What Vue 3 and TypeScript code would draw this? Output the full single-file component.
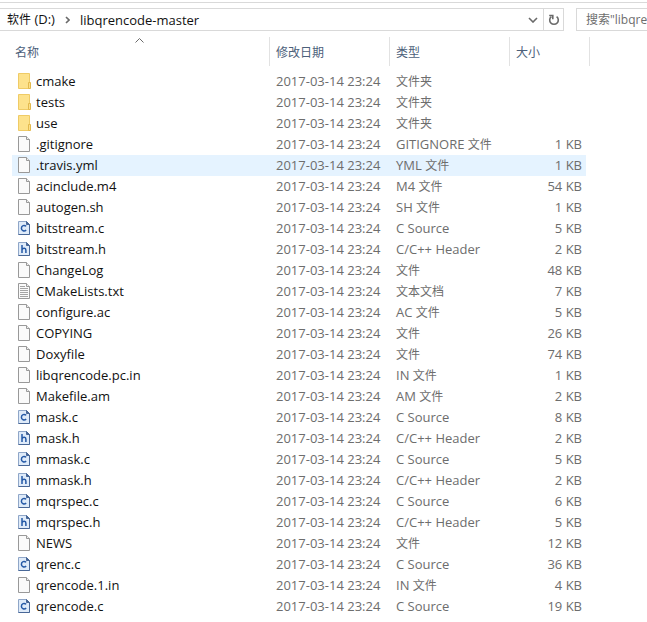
<script setup lang="ts">
import { ref } from 'vue'

type Icon = 'folder' | 'blank' | 'text' | 'c' | 'h'

interface Entry {
  name: string
  icon: Icon
  kind: string
  kindCjk: string
  size: string
}

const modified = '2017-03-14 23:24'

function folder(name: string): Entry {
  return { name, icon: 'folder', kind: '', kindCjk: '文件夹', size: '' }
}

function file(name: string, ext: string, kb: number): Entry {
  return { name, icon: 'blank', kind: ext ? ext + ' ' : '', kindCjk: '文件', size: kb + ' KB' }
}

function source(name: string, kb: number): Entry {
  const header = name.endsWith('.h')
  return {
    name,
    icon: header ? 'h' : 'c',
    kind: header ? 'C/C++ Header' : 'C Source',
    kindCjk: '',
    size: kb + ' KB',
  }
}

const entries: Entry[] = [
  folder('cmake'),
  folder('tests'),
  folder('use'),
  file('.gitignore', 'GITIGNORE', 1),
  file('.travis.yml', 'YML', 1),
  file('acinclude.m4', 'M4', 54),
  file('autogen.sh', 'SH', 1),
  source('bitstream.c', 5),
  source('bitstream.h', 2),
  file('ChangeLog', '', 48),
  { name: 'CMakeLists.txt', icon: 'text', kind: '', kindCjk: '文本文档', size: '7 KB' },
  file('configure.ac', 'AC', 5),
  file('COPYING', '', 26),
  file('Doxyfile', '', 74),
  file('libqrencode.pc.in', 'IN', 1),
  file('Makefile.am', 'AM', 2),
  source('mask.c', 8),
  source('mask.h', 2),
  source('mmask.c', 5),
  source('mmask.h', 2),
  source('mqrspec.c', 6),
  source('mqrspec.h', 5),
  file('NEWS', '', 12),
  source('qrenc.c', 36),
  file('qrencode.1.in', 'IN', 4),
  source('qrencode.c', 19),
]

const active = ref('.travis.yml')
const query = ref('')
</script>

<template>
  <div class="explorer">
    <header class="toolbar">
      <nav class="address" aria-label="路径">
        <a class="crumb" href="#"><span class="cjk">软件</span> (D:)</a>
        <svg class="chevron" viewBox="0 0 5 8" aria-hidden="true"><path d="M1 1l3 3-3 3" /></svg>
        <a class="crumb" href="#">libqrencode-master</a>
        <button class="history" type="button" aria-label="历史记录">
          <svg width="10" height="6" viewBox="0 0 10 6" aria-hidden="true"><path d="M1 1l4 4 4-4" /></svg>
        </button>
        <button class="refresh" type="button" aria-label="刷新">
          <svg width="12" height="12" viewBox="0 0 12 12" aria-hidden="true">
            <path d="M3.4 2.6A4.3 4.3 0 1 0 8.6 2.6" />
            <path d="M1.2 1.5h3.6v3.8" />
          </svg>
        </button>
      </nav>
      <input v-model="query" class="search" type="text" aria-label="搜索" placeholder='搜索"libqrencode-master"' />
    </header>

    <table class="files">
      <colgroup>
        <col class="col-name" />
        <col class="col-date" />
        <col class="col-type" />
        <col class="col-size" />
        <col class="col-edge" />
      </colgroup>
      <thead>
        <tr>
          <th scope="col" aria-sort="ascending">
            名称
            <svg class="sort" width="9" height="5" viewBox="0 0 9 5" aria-hidden="true"><path d="M.5 4.5l4-4 4 4" /></svg>
          </th>
          <th scope="col">修改日期</th>
          <th scope="col">类型</th>
          <th scope="col" colspan="2">大小</th>
        </tr>
      </thead>
      <tbody>
        <tr
          v-for="entry in entries"
          :key="entry.name"
          :class="{ active: entry.name === active }"
          @click="active = entry.name"
        >
          <td class="name">
            <div class="label">
              <svg v-if="entry.icon === 'folder'" class="icon" viewBox="0 0 13 16" aria-hidden="true">
                <path d="M.5.5h11v15H.5z" fill="#fde28c" stroke="#efcb66" />
                <path d="M10.5 9.5h2v6h-2z" fill="#fce08a" stroke="#e3b94d" />
              </svg>
              <svg v-else class="icon" viewBox="0 0 13 16" aria-hidden="true">
                <template v-if="entry.icon === 'c' || entry.icon === 'h'">
                  <path d="M.5 1.5h8l3 3v10H.5z" fill="#dfebf9" stroke="#8fa6c8" />
                  <path d="M8.5 1.5v3h3z" fill="#486797" stroke="#486797" />
                  <path d="M11.5 4.5v10H.5" fill="none" stroke="#486797" />
                  <path v-if="entry.icon === 'c'" d="M8.2 6.3C6.3 4.7 3.4 5.5 3.4 8.2s2.9 3.5 4.8 1.9" class="mark" />
                  <path v-else d="M4 4V12M4 8.5C5 6.8 7.9 6.7 7.9 9.2V12" class="mark" />
                </template>
                <template v-else>
                  <path d="M.5.5h8l3 3v12H.5z" fill="#fafafa" stroke="#999" />
                  <path d="M8.5.5v3h3" fill="#eee" stroke="#999" />
                  <path
                    v-if="entry.icon === 'text'"
                    d="M2 3.5h5M2 5.5h8M2 7.5h8M2 9.5h8M2 11.5h8M2 13.5h8"
                    stroke="#a4a4a4"
                  />
                </template>
              </svg>
              <span>{{ entry.name }}</span>
            </div>
          </td>
          <td>{{ modified }}</td>
          <td>{{ entry.kind }}<span class="cjk">{{ entry.kindCjk }}</span></td>
          <td class="size">{{ entry.size }}</td>
        </tr>
      </tbody>
    </table>
  </div>
</template>

<style>
body {
  background: #fff;
}
</style>

<style scoped>
.explorer {
  padding-top: 2px;
  overflow: hidden;
  color: #6d6d6d;
  font-family: 'Open Sans', 'Noto Sans CJK SC', sans-serif;
  font-size: 13px;
}

.cjk {
  font-size: 12px;
}

.toolbar {
  display: flex;
  gap: 12px;
  padding-top: 5px;
  border-top: 1px solid #d9d9d9;
}

.address {
  display: flex;
  flex: 1;
  align-items: center;
  box-sizing: border-box;
  height: 23px;
  padding-left: 7px;
  border: 1px solid #d9d9d9;
  border-left: 0;
}

.crumb {
  color: #111;
  text-decoration: none;
  line-height: 20px;
}

.chevron {
  width: 5px;
  height: 8px;
  margin: 0 10px;
}

.toolbar svg {
  fill: none;
  stroke: #6a6a6a;
  stroke-width: 1.6;
}

.toolbar button {
  display: flex;
  align-items: center;
  justify-content: center;
  width: 20px;
  height: 21px;
  padding: 0;
  border: 0;
  background: none;
}

.toolbar .history {
  margin-left: auto;
}

.toolbar .refresh {
  border-left: 1px solid #d9d9d9;
}

.search {
  box-sizing: border-box;
  flex: 0 0 71px;
  width: 71px;
  height: 23px;
  padding: 0 0 0 9px;
  border: 1px solid #d9d9d9;
  border-right: 0;
  border-radius: 0;
  outline: 0;
  background: #fff;
  font: inherit;
  font-size: 12px;
}

.search::placeholder {
  color: #6d6d6d;
  opacity: 1;
}

.files {
  width: 578px;
  margin: 6px 0 0 12px;
  border-collapse: separate;
  border-spacing: 0;
  table-layout: fixed;
}

.col-name {
  width: 258px;
}

.col-date,
.col-type {
  width: 120px;
}

.col-size {
  width: 76px;
}

.col-edge {
  width: 4px;
}

th {
  position: relative;
  height: 29px;
  padding: 0 6px;
  border-right: 1px solid #e2e2e2;
  color: #4c607a;
  font-size: 12px;
  font-weight: 400;
  text-align: left;
}

th:first-child {
  padding-left: 3px;
}

.sort {
  position: absolute;
  top: 1px;
  left: 123px;
  fill: none;
  stroke: #6a6a6a;
}

tbody::before {
  content: '';
  display: table-row;
  height: 5px;
}

td {
  height: 21px;
  padding: 0 6px;
  line-height: 21px;
  white-space: nowrap;
}

.active td {
  background: #e5f3ff;
}

.name {
  color: #111;
}

.label {
  display: flex;
  gap: 5px;
}

.icon {
  width: 13px;
  height: 16px;
  margin-top: 2px;
}

.mark {
  fill: none;
  stroke: #2559a6;
  stroke-width: 1.5;
}

.size {
  padding-right: 4px;
  text-align: right;
}
</style>
